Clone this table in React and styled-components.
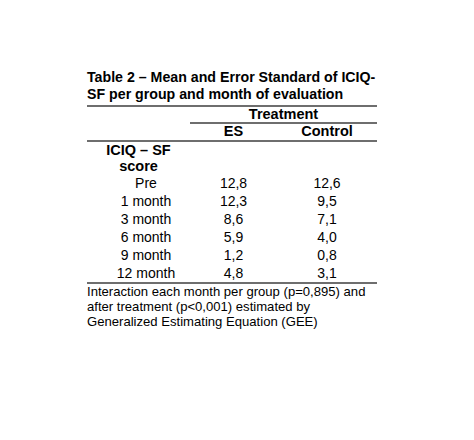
import React from "react";
import styled, { createGlobalStyle } from "styled-components";

const GlobalStyle = createGlobalStyle`
    html, body {
        margin:0;
        padding:0;
        background:#fff;
    }
    body {
        font-family:"Liberation Sans", Arial, sans-serif;
        color:#000;
    }
`
const Page = styled.div`
    width:474px;
    height:440px;
    padding:69px 0 0 87px;
    box-sizing:border-box;
`
const Wrapper = styled.div`
    width:290px;
`
const Title = styled.h2`
    margin:0;
    padding:0 0 2px 0;
    font-size:14.2px;
    font-weight:700;
    line-height:17px;
    white-space:nowrap;
    border-bottom:2px solid #6e6e6e;
`
const Table = styled.table`
    width:290px;
    border-collapse:separate;
    border-spacing:0;
    table-layout:fixed;
    font-size:14px;
`
const Col = styled.col`
    width:${props => props.w}px;
`
const Head = styled.th`
    padding:0 0 ${props => props.pb || 0}px 0;
    font-size:14.5px;
    font-weight:700;
    text-align:center;
    line-height:${props => props.lh || 15}px;
    border-bottom:${props => props.line ? "2px solid #6e6e6e" : "none"};
`
const Label = styled.td`
    padding:0 0 0 15px;
    text-align:center;
    line-height:18px;
`
const Value = styled.td`
    padding:0;
    text-align:center;
    line-height:18px;
`
const Row = styled.tr`
    td {
        border-bottom:${props => props.last ? "2px solid #6e6e6e" : "none"};
    }
`
const Note = styled.p`
    margin:0;
    font-size:13.1px;
    line-height:15px;
`

const rows = [
    ["Pre", "12,8", "12,6"],
    ["1 month", "12,3", "9,5"],
    ["3 month", "8,6", "7,1"],
    ["6 month", "5,9", "4,0"],
    ["9 month", "1,2", "0,8"],
    ["12 month", "4,8", "3,1"],
]

const App = () => {
    return (
        <Page>
            <GlobalStyle />
            <Wrapper>
                <Title>Table 2 – Mean and Error Standard of ICIQ-<br />SF per group and month of evaluation</Title>
                <Table>
                    <colgroup>
                        <Col w={103} />
                        <Col w={87} />
                        <Col w={100} />
                    </colgroup>
                    <thead>
                        <tr>
                            <Head></Head>
                            <Head colSpan={2} line>Treatment</Head>
                        </tr>
                        <tr>
                            <Head line pb={1}></Head>
                            <Head line pb={1}>ES</Head>
                            <Head line pb={1}>Control</Head>
                        </tr>
                        <tr>
                            <Head lh={16}>ICIQ – SF<br />score</Head>
                            <Head lh={16}></Head>
                            <Head lh={16}></Head>
                        </tr>
                    </thead>
                    <tbody>
                        {rows.map((r, i) => (
                            <Row key={r[0]} last={i === rows.length - 1}>
                                <Label>{r[0]}</Label>
                                <Value>{r[1]}</Value>
                                <Value>{r[2]}</Value>
                            </Row>
                        ))}
                    </tbody>
                </Table>
                <Note>
                    Interaction each month per group (p=0,895) and<br />
                    after treatment (p&lt;0,001) estimated by<br />
                    Generalized Estimating Equation (GEE)
                </Note>
            </Wrapper>
        </Page>
    )
}

export default App;
